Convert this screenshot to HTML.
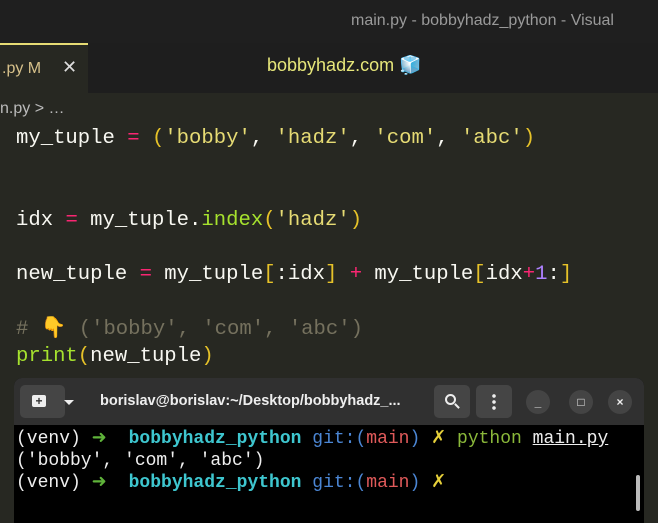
<!DOCTYPE html>
<html><head><style>
*{margin:0;padding:0;box-sizing:border-box}
body{width:658px;height:519px;overflow:hidden;background:#272822;position:relative;font-family:"Liberation Sans",sans-serif}
.title{position:absolute;left:0;top:0;width:658px;height:43px;background:#1f1f1f;color:#9a9a9a;font-size:16px}
.title span{position:absolute;left:351px;top:12px;white-space:nowrap}
.tabs{position:absolute;left:0;top:43px;width:658px;height:50px;background:#1e1e1e}
.tab{position:absolute;left:0;top:0;width:88px;height:50px;background:#272822;border-top:2px solid #e6db74;color:#d6c08a;font-size:16px}
.tab span{position:absolute;left:2px;top:15px}
.tab b{position:absolute;left:62px;top:12px;color:#ddd;font-weight:normal;font-size:18px}
.brand{position:absolute;left:267px;top:55px;color:#e6e67a;font-size:18px}
.bc{position:absolute;left:0;top:100px;color:#bbb;font-size:16px}
.code{position:absolute;left:16px;top:125px;font-family:"Liberation Mono",monospace;font-size:20.6px;line-height:27.3px;color:#f8f8f2;white-space:pre}
.p{color:#f92672}.s{color:#e6db74}.y{color:#e6c229}.g{color:#a6e22e}.n{color:#ae81ff}.c{color:#75715e}
.term{position:absolute;left:14px;top:378px;width:630px;height:145px;background:#000;border-radius:8px 8px 0 0;overflow:hidden}
.th{position:absolute;left:0;top:0;width:630px;height:47px;background:#303030}
.btn{position:absolute;background:#454545;border-radius:5px}
.tt{position:absolute;left:86px;top:15px;color:#eee;font-size:14.5px;font-weight:bold}
.circ{position:absolute;top:12px;width:24px;height:24px;border-radius:50%;background:#444;color:#eee;font-size:12px;text-align:center;line-height:24px;font-weight:bold}
.tb{position:absolute;left:2px;top:50px;font-family:"Liberation Mono",monospace;font-size:18px;line-height:22px;color:#eee;white-space:pre}
.gr{color:#5fb33a;display:inline-block;width:37px}.cy{color:#3ec6cf;font-weight:bold}.bl{color:#4b86d4}.rd{color:#e05a5a}.yl{color:#e6d03a}.pg{color:#8ab83a}
</style></head><body>
<div class="title"><span>main.py - bobbyhadz_python - Visual</span></div>
<div class="tabs"><div class="tab"><span>.py M</span><b>✕</b></div></div>
<div class="brand">bobbyhadz.com <span style="color:#7cc8f0">&#x1F9CA;</span></div>
<div class="bc">n.py &gt; …</div>
<div class="code">my_tuple <span class="p">=</span> <span class="y">(</span><span class="s">'bobby'</span>, <span class="s">'hadz'</span>, <span class="s">'com'</span>, <span class="s">'abc'</span><span class="y">)</span>


idx <span class="p">=</span> my_tuple.<span class="g">index</span><span class="y">(</span><span class="s">'hadz'</span><span class="y">)</span>

new_tuple <span class="p">=</span> my_tuple<span class="y">[</span>:idx<span class="y">]</span> <span class="p">+</span> my_tuple<span class="y">[</span>idx<span class="p">+</span><span class="n">1</span>:<span class="y">]</span>

<span class="c"># <span style="color:#f0b020">&#x1F447;</span> ('bobby', 'com', 'abc')</span>
<span class="g" style="width:auto;display:inline">print</span><span class="y">(</span>new_tuple<span class="y">)</span></div>
<div class="term">
<div class="th">
<div class="btn" style="left:6px;top:7px;width:45px;height:33px;"></div>
<div style="position:absolute;left:18px;top:17px;width:14px;height:12px;background:#eee;border-radius:2px;color:#333;font-size:12px;line-height:12px;text-align:center;font-weight:bold">+</div>
<div style="position:absolute;left:50px;top:22px;border:5px solid transparent;border-top-color:#eee"></div>
<div class="tt">borislav@borislav:~/Desktop/bobbyhadz_...</div>
<div class="btn" style="left:420px;top:7px;width:36px;height:33px;"></div>
<div style="position:absolute;left:431px;top:16px;width:11px;height:11px;border:2px solid #eee;border-radius:50%"></div>
<div style="position:absolute;left:440px;top:27px;width:6px;height:2px;background:#eee;transform:rotate(45deg)"></div>
<div class="btn" style="left:462px;top:7px;width:36px;height:33px;"></div>
<div style="position:absolute;left:478px;top:15px;width:4px;height:18px;background:radial-gradient(circle,#eee 1.6px,transparent 2px) 0 0/4px 6px"></div>
<div class="circ" style="left:512px">_</div>
<div class="circ" style="left:555px">□</div>
<div class="circ" style="left:594px">×</div>
</div>
<div class="tb">(venv) <span class="gr">➜</span><span class="cy">bobbyhadz_python</span> <span class="bl">git:(</span><span class="rd">main</span><span class="bl">)</span> <span class="yl">✗</span> <span class="pg">python</span> <span style="text-decoration:underline">main.py</span>
('bobby', 'com', 'abc')
(venv) <span class="gr">➜</span><span class="cy">bobbyhadz_python</span> <span class="bl">git:(</span><span class="rd">main</span><span class="bl">)</span> <span class="yl">✗</span></div>
<div style="position:absolute;left:622px;top:97px;width:4px;height:36px;background:#bbb;border-radius:2px"></div>
</div>
</body></html>
